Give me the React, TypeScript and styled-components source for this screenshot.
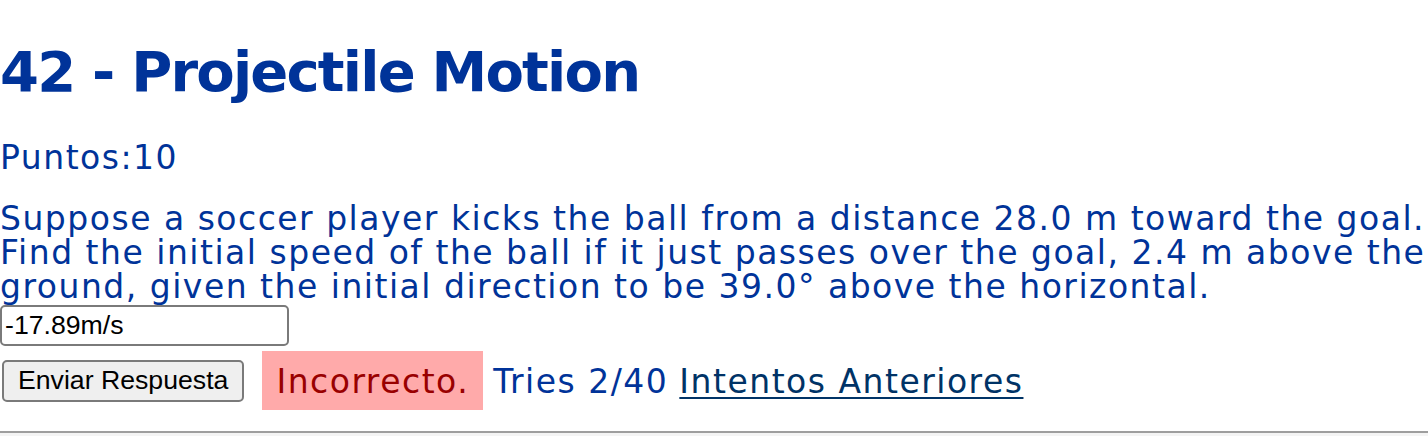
import React from 'react'
import styled, { createGlobalStyle } from 'styled-components'

const GlobalStyle = createGlobalStyle`
  html, body {
    margin: 0;
    padding: 0;
    background: #ffffff;
  }
  body {
    font-family: 'DejaVu Sans', Verdana, sans-serif;
    color: #003399;
  }
`

const Page = styled.div`
  width: 1428px;
  overflow: hidden;
`

const Title = styled.h1`
  margin: 40px 0 0;
  font-size: 56px;
  line-height: 64px;
  font-weight: bold;
  letter-spacing: -1.8px;
  white-space: nowrap;
`

const Points = styled.p`
  margin: 37px 0 0;
  font-size: 33px;
  line-height: 34px;
  letter-spacing: 1.5px;
`

const Question = styled.p`
  margin: 27px 0 0;
  font-size: 33px;
  line-height: 34px;
  letter-spacing: 1.5px;
  white-space: nowrap;
`

const AnswerInput = styled.input`
  display: block;
  box-sizing: border-box;
  width: 289px;
  height: 41px;
  margin: 1px 0 0;
  padding: 0 3px;
  border: 2px solid #7a7a7a;
  border-radius: 5px;
  font-family: 'Liberation Sans', Arial, sans-serif;
  font-size: 26.67px;
  color: #000000;
  background: #ffffff;
`

const ResultRow = styled.div`
  display: flex;
  align-items: center;
  margin-top: 5px;
  font-size: 33px;
  letter-spacing: 1.5px;
`

const SubmitButton = styled.button`
  box-sizing: border-box;
  height: 42px;
  margin: 0 18px 0 2px;
  padding: 0 14px;
  border: 2px solid #7a7a7a;
  border-radius: 5px;
  background: #efefef;
  color: #000000;
  font-family: 'Liberation Sans', Arial, sans-serif;
  font-size: 26.67px;
  letter-spacing: 0;
`

const Verdict = styled.span<{ $ok: boolean }>`
  display: flex;
  align-items: center;
  height: 59px;
  padding: 2px 14px 0 14px;
  box-sizing: border-box;
  background: ${p => (p.$ok ? '#aaffaa' : '#ffaaaa')};
  color: ${p => (p.$ok ? '#006600' : '#990000')};
`

const Tries = styled.span`
  margin: 2px 0 0 10px;
  color: #003399;
`

const HistoryLink = styled.a`
  margin: 2px 0 0 11px;
  color: #003366;
  text-decoration: underline;
  text-decoration-thickness: 2px;
  text-underline-offset: 4px;
`

const Divider = styled.div`
  margin-top: 21px;
  border-top: 2px solid #9e9e9e;
  height: 10px;
  background: #f4f4f4;
`

export default function App() {
  return (
    <Page>
      <GlobalStyle />
      <Title>42 - Projectile Motion</Title>
      <Points>Puntos:10</Points>
      <Question>
        Suppose a soccer player kicks the ball from a distance 28.0 m toward the goal.
        <br />
        Find the initial speed of the ball if it just passes over the goal, 2.4 m above the
        <br />
        ground, given the initial direction to be 39.0° above the horizontal.
      </Question>
      <AnswerInput type='text' defaultValue='-17.89m/s' />
      <ResultRow>
        <SubmitButton type='button'>Enviar Respuesta</SubmitButton>
        <Verdict $ok={false}>Incorrecto.</Verdict>
        <Tries>Tries 2/40</Tries>
        <HistoryLink href='#'>Intentos Anteriores</HistoryLink>
      </ResultRow>
      <Divider />
    </Page>
  )
}
